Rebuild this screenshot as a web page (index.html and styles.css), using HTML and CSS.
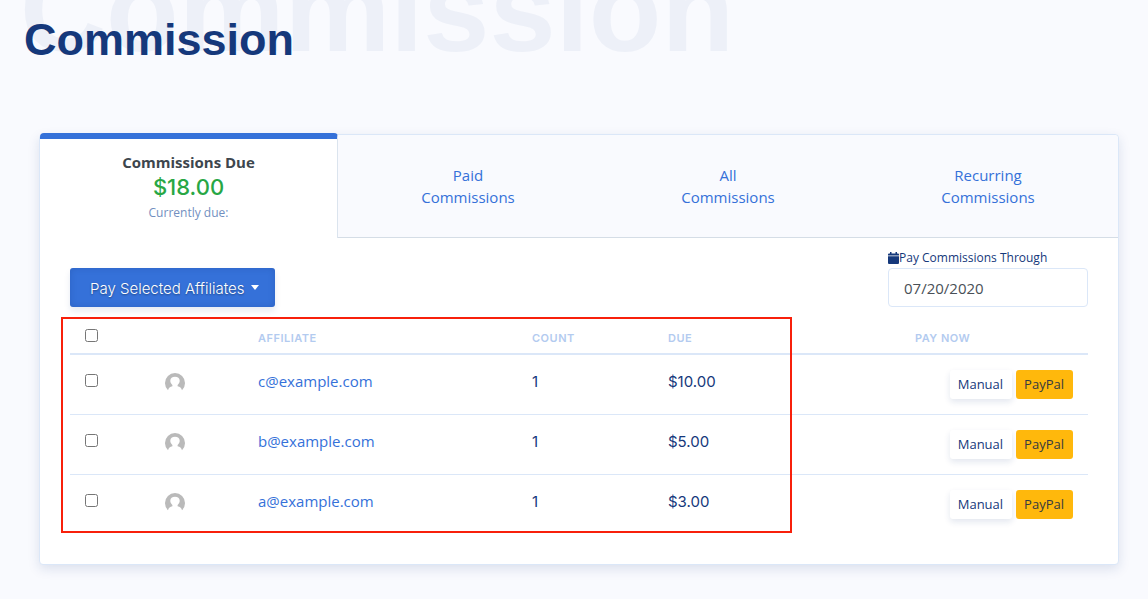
FILE: index.html
```
<!DOCTYPE html>
<html lang="en">
<head>
    <meta charset="UTF-8">
    <meta name="viewport" content="width=device-width, initial-scale=1.0">
    <title>Commission</title>
    <link rel="stylesheet" href="styles.css">
</head>
<body>
    <svg class="sprite" aria-hidden="true">
        <symbol id="avatar" viewBox="0 0 20 20">
            <path fill="#bababa" d="M3 17.200A10 10 0 1 1 17 17.200C16.400 14.800 15 13.800 12.600 13.200V12C13.900 11 14.700 9.500 14.700 7.800C14.700 5.200 12.800 3.700 10 3.700S5.300 5.200 5.300 7.800C5.300 9.500 6.100 11 7.400 12V13.200C5 13.800 3.600 14.800 3 17.200Z"/>
        </symbol>
    </svg>

    <header class="page-header">
        <span class="ghost" aria-hidden="true">Commission</span>
        <h1>Commission</h1>
    </header>

    <main class="card">
        <nav class="tabs">
            <a href="#due" class="tab active">
                <strong>Commissions Due</strong>
                <span class="amount">$18.00</span>
                <small>Currently due:</small>
            </a>
            <a href="#paid" class="tab">Paid<br>Commissions</a>
            <a href="#all" class="tab">All<br>Commissions</a>
            <a href="#recurring" class="tab">Recurring<br>Commissions</a>
        </nav>

        <div class="card-body">
            <div class="toolbar">
                <button type="button" class="btn-pay">Pay Selected Affiliates <span class="caret"></span></button>
                <div class="through">
                    <label for="through">
                        <svg width="11" height="12" viewBox="0 0 11 12" aria-hidden="true">
                            <path fill="#15387b" d="M0 3.500V2.500Q0 1.500 1 1.500H2V0H3.500V1.500H7.500V0H9V1.500H10Q11 1.500 11 2.500V3.500ZM0 4.200H11V11Q11 12 10 12H1Q0 12 0 11Z"/>
                        </svg>Pay Commissions Through
                    </label>
                    <input type="text" id="through" value="07/20/2020">
                </div>
            </div>

            <table class="affiliates">
                <colgroup>
                    <col class="col-check">
                    <col class="col-avatar">
                    <col class="col-name">
                    <col class="col-count">
                    <col class="col-due">
                    <col class="col-pay">
                </colgroup>
                <thead>
                    <tr>
                        <th><input type="checkbox" aria-label="Select all"></th>
                        <th></th>
                        <th>Affiliate</th>
                        <th>Count</th>
                        <th>Due</th>
                        <th>Pay Now</th>
                    </tr>
                </thead>
                <tbody>
                    <tr>
                        <td><input type="checkbox" aria-label="Select c@example.com"></td>
                        <td><svg class="avatar"><use href="#avatar"/></svg></td>
                        <td><a href="#c">c@example.com</a></td>
                        <td class="num">1</td>
                        <td class="num">$10.00</td>
                        <td class="actions"><div><button type="button" class="btn">Manual</button><button type="button" class="btn paypal">PayPal</button></div></td>
                    </tr>
                    <tr>
                        <td><input type="checkbox" aria-label="Select b@example.com"></td>
                        <td><svg class="avatar"><use href="#avatar"/></svg></td>
                        <td><a href="#b">b@example.com</a></td>
                        <td class="num">1</td>
                        <td class="num">$5.00</td>
                        <td class="actions"><div><button type="button" class="btn">Manual</button><button type="button" class="btn paypal">PayPal</button></div></td>
                    </tr>
                    <tr>
                        <td><input type="checkbox" aria-label="Select a@example.com"></td>
                        <td><svg class="avatar"><use href="#avatar"/></svg></td>
                        <td><a href="#a">a@example.com</a></td>
                        <td class="num">1</td>
                        <td class="num">$3.00</td>
                        <td class="actions"><div><button type="button" class="btn">Manual</button><button type="button" class="btn paypal">PayPal</button></div></td>
                    </tr>
                </tbody>
            </table>
            <div class="highlight"></div>
        </div>
    </main>
</body>
</html>
```

FILE: styles.css
```
* {
    box-sizing: border-box;
}
body {
    margin: 0;
    background: #f9fafe;
    color: #15387b;
    font-family: "Open Sans", "Noto Sans", sans-serif;
    font-size: 15px;
    line-height: 22px;
}
a {
    color: #3571d9;
    text-decoration: none;
}
.sprite {
    display: block;
    width: 0;
    height: 0;
}

/* title with the big faded copy behind it */
.page-header {
    position: relative;
    overflow: hidden;
    padding: 13px 24px 67px;
    font-family: "Liberation Sans", Arial, sans-serif;
    font-weight: bold;
}
.page-header h1 {
    position: relative;
    margin: 0;
    font-size: 45px;
    line-height: 54px;
}
.ghost {
    position: absolute;
    left: 20px;
    top: -50px;
    font-size: 119px;
    line-height: 120px;
    color: #edf0f8;
}

.card {
    margin: 0 29px 34px 39px;
    background: #fff;
    border: 1px solid #dbe7f8;
    border-radius: 4px;
    box-shadow: 0 4px 12px rgba(21, 56, 123, 0.13);
}

.tabs {
    display: grid;
    grid-template-columns: 298fr 260fr 260fr 260fr;
}
.tab {
    display: flex;
    flex-direction: column;
    justify-content: center;
    height: 103px;
    background: #f9fafe;
    border-bottom: 1px solid #d5dde6;
    text-align: center;
}
.tab:last-child {
    border-top-right-radius: 4px;
}
.tab.active {
    justify-content: flex-start;
    height: 105px;
    margin-top: -2px;
    padding-top: 12px;
    background: #fff;
    border-top: 6px solid #3571d9;
    border-right: 1px solid #dbe4ee;
    border-bottom: 0;
    border-radius: 4px 4px 0 0;
    color: #3d464d;
}
.tab strong {
    line-height: 22px;
}
.tab .amount {
    color: #28a745;
    font-family: Inter, sans-serif;
    font-size: 22px;
    font-weight: 500;
    line-height: 28px;
}
.tab small {
    color: #728fc0;
    font-size: 12px;
    line-height: 24px;
}

.card-body {
    position: relative;
    padding: 10px 30px 29px;
}
.toolbar {
    display: flex;
    justify-content: space-between;
    align-items: flex-end;
    margin-bottom: 14px;
}
.btn-pay {
    display: flex;
    align-items: center;
    gap: 6px;
    height: 39px;
    padding: 2px 16px 0 20px;
    background: #3571d9;
    border: 0;
    border-radius: 3px;
    box-shadow: inset 0 0 6px rgba(21, 56, 123, 0.25), 0 4px 6px rgba(21, 56, 123, 0.1);
    color: #fff;
    font-family: Inter, sans-serif;
    font-size: 15px;
    font-weight: 300;
    text-shadow: 0 1px 2px rgba(0, 0, 0, 0.4);
    cursor: pointer;
}
.caret {
    margin-bottom: 2px;
    border: 4px solid transparent;
    border-top: 5px solid #fff;
    border-bottom: 0;
}
.through {
    width: 200px;
}
.through label {
    display: flex;
    align-items: center;
    font-size: 12px;
    line-height: 20px;
}
.through input {
    display: block;
    width: 100%;
    height: 39px;
    padding: 0 15px;
    border: 1px solid #dbe7f8;
    border-radius: 4px;
    background: #fff;
    color: #495057;
    font: inherit;
}

.affiliates {
    width: 100%;
    table-layout: fixed;
    border-collapse: separate;
    border-spacing: 0;
}
.col-check { width: 80px; }
.col-avatar { width: 93px; }
.col-name { width: 274px; }
.col-count { width: 136px; }
.col-due { width: 247px; }
.col-pay { width: 188px; }

.affiliates th {
    height: 34px;
    padding: 2px 15px 0;
    border-bottom: 2px solid #dbe7f8;
    color: #b3cbf0;
    font-family: Inter, sans-serif;
    font-size: 11px;
    font-weight: 600;
    line-height: 14px;
    letter-spacing: 0.5px;
    text-align: left;
    text-transform: uppercase;
}
.affiliates td {
    height: 60px;
    padding: 15px 15px 0;
    border-bottom: 1px solid #dbe7f8;
    vertical-align: top;
}
.affiliates tr:last-child td {
    border-bottom: 0;
}
.affiliates input {
    display: block;
    width: 13px;
    height: 13px;
    margin: 0;
}
.affiliates th input {
    margin-bottom: 5px;
}
.affiliates td input {
    margin-top: 4px;
}
.affiliates .num {
    padding-top: 16px;
    font-family: Inter, sans-serif;
}
.avatar {
    display: block;
    width: 20px;
    height: 20px;
    margin-top: 3px;
}
.actions div {
    display: flex;
    justify-content: flex-end;
    gap: 4px;
}
.btn {
    height: 29px;
    padding: 0 9px 2px 8px;
    background: #fff;
    border: 0;
    border-radius: 3px;
    box-shadow: 0 3px 6px rgba(21, 56, 123, 0.12);
    color: #15387b;
    font-family: inherit;
    font-size: 13px;
    cursor: pointer;
}
.btn.paypal {
    background: #ffb80c;
    box-shadow: none;
    color: #343a40;
}

/* red frame over the affiliate columns */
.highlight {
    position: absolute;
    left: 21px;
    top: 79px;
    width: 731px;
    height: 216px;
    border: 2px solid #f8200b;
    pointer-events: none;
}
```
